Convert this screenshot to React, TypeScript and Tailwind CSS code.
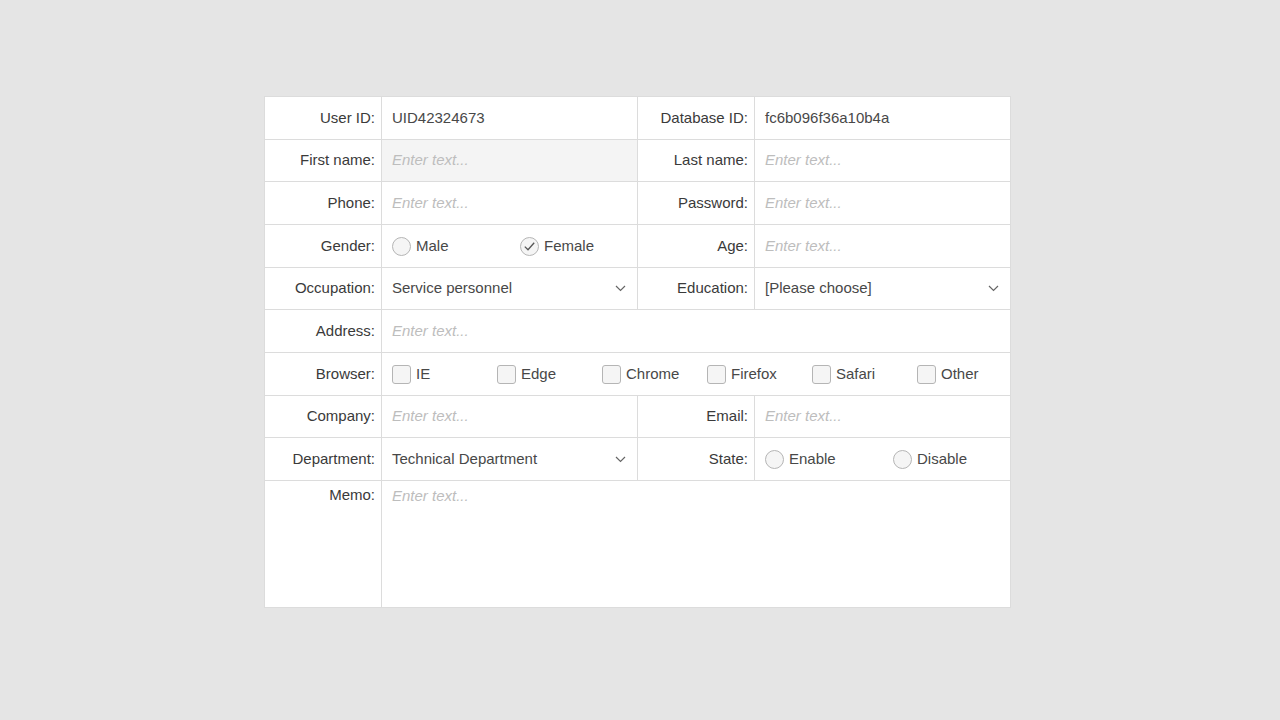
import React from "react";

const font = { fontFamily: '"Liberation Sans", Arial, sans-serif' };

function Label({ children, top = false }: { children: React.ReactNode; top?: boolean }) {
  return (
    <div
      className={`flex justify-end pr-[6px] border-r border-b border-[#dcdcdc] text-[15px] text-[#3a3a3a] ${
        top ? "items-start pt-[3px]" : "items-center"
      }`}
    >
      {children}
    </div>
  );
}

function Cell({
  children,
  span = 1,
  bg = "bg-white",
  top = false,
}: {
  children: React.ReactNode;
  span?: 1 | 3;
  bg?: string;
  top?: boolean;
}) {
  return (
    <div
      className={`${span === 3 ? "col-span-3" : ""} ${bg} flex pl-[10px] pr-[10px] border-r border-b border-[#dcdcdc] text-[15px] text-[#484848] ${
        top ? "items-start pt-[4px]" : "items-center"
      }`}
    >
      {children}
    </div>
  );
}

function Placeholder() {
  return <span className="italic text-[#bdbdbd]">Enter text...</span>;
}

function Radio({ label, checked = false }: { label: string; checked?: boolean }) {
  return (
    <div className="flex items-center w-[128px] shrink-0">
      <span className="w-[19px] h-[19px] rounded-full border border-[#b5b5b5] bg-[#f5f5f5] flex items-center justify-center">
        {checked && (
          <svg width="15" height="15" viewBox="0 0 15 15">
            <path d="M2.8 7.6 L6 10.8 L12.2 3.8" fill="none" stroke="#555" strokeWidth="1.3" />
          </svg>
        )}
      </span>
      <span className="ml-[5px] text-[#484848]">{label}</span>
    </div>
  );
}

function Check({ label }: { label: string }) {
  return (
    <div className="flex items-center w-[105px] shrink-0">
      <span className="w-[19px] h-[19px] rounded-[3px] border border-[#b5b5b5] bg-[#f5f5f5]" />
      <span className="ml-[5px] text-[#484848]">{label}</span>
    </div>
  );
}

function Select({ value }: { value: string }) {
  return (
    <div className="flex items-center justify-between w-full">
      <span>{value}</span>
      <svg width="11" height="7" viewBox="0 0 11 7" className="mr-[1px]">
        <path d="M1 1 L5.5 5.5 L10 1" fill="none" stroke="#666" strokeWidth="1.2" />
      </svg>
    </div>
  );
}

export default function App() {
  return (
    <div className="min-h-[720px] w-full bg-[#e5e5e5] pt-[96px] pl-[264px]" style={font}>
      <div
        className="grid w-[747px] border-l border-t border-[#dcdcdc] bg-white"
        style={{
          gridTemplateColumns: "117px 256px 117px 256px",
          gridTemplateRows: "43px 42px 43px 43px 42px 43px 43px 42px 43px 127px",
        }}
      >
        <Label>User ID:</Label>
        <Cell>UID42324673</Cell>
        <Label>Database ID:</Label>
        <Cell>fc6b096f36a10b4a</Cell>

        <Label>First name:</Label>
        <Cell bg="bg-[#f4f4f4]">
          <Placeholder />
        </Cell>
        <Label>Last name:</Label>
        <Cell>
          <Placeholder />
        </Cell>

        <Label>Phone:</Label>
        <Cell>
          <Placeholder />
        </Cell>
        <Label>Password:</Label>
        <Cell>
          <Placeholder />
        </Cell>

        <Label>Gender:</Label>
        <Cell>
          <Radio label="Male" />
          <Radio label="Female" checked />
        </Cell>
        <Label>Age:</Label>
        <Cell>
          <Placeholder />
        </Cell>

        <Label>Occupation:</Label>
        <Cell>
          <Select value="Service personnel" />
        </Cell>
        <Label>Education:</Label>
        <Cell>
          <Select value="[Please choose]" />
        </Cell>

        <Label>Address:</Label>
        <Cell span={3}>
          <Placeholder />
        </Cell>

        <Label>Browser:</Label>
        <Cell span={3}>
          <Check label="IE" />
          <Check label="Edge" />
          <Check label="Chrome" />
          <Check label="Firefox" />
          <Check label="Safari" />
          <Check label="Other" />
        </Cell>

        <Label>Company:</Label>
        <Cell>
          <Placeholder />
        </Cell>
        <Label>Email:</Label>
        <Cell>
          <Placeholder />
        </Cell>

        <Label>Department:</Label>
        <Cell>
          <Select value="Technical Department" />
        </Cell>
        <Label>State:</Label>
        <Cell>
          <Radio label="Enable" />
          <Radio label="Disable" />
        </Cell>

        <Label top>Memo:</Label>
        <Cell span={3} top>
          <Placeholder />
        </Cell>
      </div>
    </div>
  );
}
